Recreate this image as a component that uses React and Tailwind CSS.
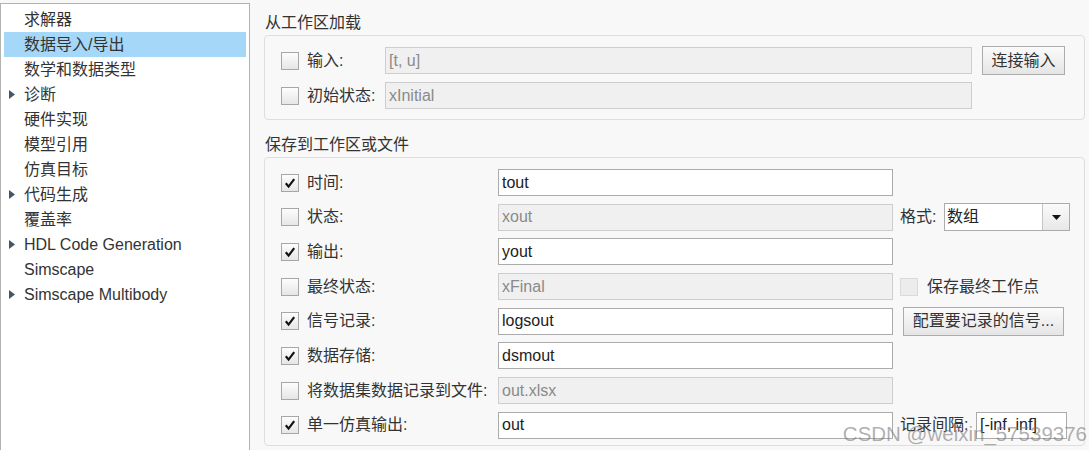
import React from "react";

const navItems = [
  { label: "求解器" },
  { label: "数据导入/导出", active: true },
  { label: "数学和数据类型" },
  { label: "诊断", arrow: true },
  { label: "硬件实现" },
  { label: "模型引用" },
  { label: "仿真目标" },
  { label: "代码生成", arrow: true },
  { label: "覆盖率" },
  { label: "HDL Code Generation", arrow: true },
  { label: "Simscape" },
  { label: "Simscape Multibody", arrow: true },
];

const saveRows = [
  { label: "时间:", value: "tout", checked: true },
  { label: "状态:", value: "xout", extra: "format" },
  { label: "输出:", value: "yout", checked: true },
  { label: "最终状态:", value: "xFinal", extra: "op" },
  { label: "信号记录:", value: "logsout", checked: true, extra: "signals" },
  { label: "数据存储:", value: "dsmout", checked: true },
  { label: "将数据集数据记录到文件:", value: "out.xlsx" },
  { label: "单一仿真输出:", value: "out", checked: true, extra: "interval" },
];

function Checkbox({ checked, disabled }) {
  return (
    <div
      className={
        disabled
          ? "w-[18px] h-[18px] shrink-0 border border-[#dadada] bg-[#ececec]"
          : "w-[18px] h-[18px] shrink-0 border border-[#a7a7a7] bg-gradient-to-b from-[#fdfdfd] to-[#e6e6e6] flex items-center justify-center"
      }
    >
      {checked && (
        <svg width="12" height="12" viewBox="0 0 12 12">
          <path d="M1.8 6.2 L4.6 9.6 L10.2 2.2" fill="none" stroke="#111" strokeWidth="2.2" />
        </svg>
      )}
    </div>
  );
}

function TextField({ value, enabled, w }) {
  return (
    <div
      className={
        enabled
          ? `${w} h-[27px] shrink-0 flex items-center px-[3px] bg-white border border-[#ababab] text-[#222]`
          : `${w} h-[27px] shrink-0 flex items-center px-[3px] bg-[#f0f0f0] border border-[#cdcdcd] text-[#8a8a8a]`
      }
    >
      {value}
    </div>
  );
}

function Button({ children, className }) {
  return (
    <div
      className={`h-[29px] flex items-center justify-center border border-[#acacac] bg-gradient-to-b from-[#fbfbfb] to-[#e5e5e5] text-[#333] ${className}`}
    >
      {children}
    </div>
  );
}

function Extra({ kind }) {
  if (kind === "format") {
    return (
      <div className="flex items-center">
        <span className="w-[44px]">格式:</span>
        <div className="w-[126px] h-[28px] flex bg-white border border-[#acacac]">
          <span className="flex-1 flex items-center pl-[2px] text-[#222]">数组</span>
          <div className="w-[27px] flex items-center justify-center border-l border-[#c4c4c4] bg-gradient-to-b from-[#fafafa] to-[#e8e8e8]">
            <svg width="9" height="5" viewBox="0 0 9 5">
              <path d="M0 0 H9 L4.5 5 Z" fill="#111" />
            </svg>
          </div>
        </div>
      </div>
    );
  }
  if (kind === "op") {
    return (
      <div className="flex items-center gap-[9px]">
        <Checkbox disabled />
        <span>保存最终工作点</span>
      </div>
    );
  }
  if (kind === "signals") {
    return <Button className="ml-[3px] w-[161px] h-[28px]">配置要记录的信号...</Button>;
  }
  if (kind === "interval") {
    return (
      <div className="flex items-center">
        <span className="w-[76px]">记录间隔:</span>
        <TextField value="[-inf, inf]" enabled w="w-[91px]" />
      </div>
    );
  }
  return null;
}

export default function App() {
  return (
    <div
      className="relative w-[1089px] h-[450px] flex bg-[#f8f8f8] text-[16px] text-[#333] overflow-hidden"
      style={{ fontFamily: '"Liberation Sans", "Noto Sans CJK SC", sans-serif' }}
    >
      <div className="w-[250px] shrink-0 mt-[3px] bg-white border-t border-l border-r border-[#b2b2b2] px-[3px] pt-[3px]">
        <ul className="flex flex-col">
          {navItems.map((it) => (
            <li
              key={it.label}
              className={`h-[25px] flex items-center ${it.active ? "bg-[#a4d7f8]" : ""}`}
            >
              <span className="w-[20px] shrink-0 pl-[5px] flex items-center">
                {it.arrow && (
                  <svg width="6" height="9" viewBox="0 0 6 9">
                    <path d="M0 0 L6 4.5 L0 9 Z" fill="#44546a" />
                  </svg>
                )}
              </span>
              <span className="whitespace-nowrap">{it.label}</span>
            </li>
          ))}
        </ul>
      </div>

      <div className="flex-1 pl-[14px] pt-[11px]">
        <h3 className="h-[24px] leading-[24px] pl-[1px] font-normal">从工作区加载</h3>
        <div className="w-[821px] border border-[#dedede] rounded-[4px] pl-[16px] pt-[11px] pb-[10px] flex flex-col gap-[8px]">
          <div className="flex items-center h-[27px]">
            <Checkbox />
            <span className="ml-[8px] w-[78px]">输入:</span>
            <TextField value="[t, u]" w="w-[587px]" />
            <Button className="ml-[10px] w-[83px]">连接输入</Button>
          </div>
          <div className="flex items-center h-[27px]">
            <Checkbox />
            <span className="ml-[8px] w-[78px]">初始状态:</span>
            <TextField value="xInitial" w="w-[587px]" />
          </div>
        </div>

        <h3 className="mt-[13px] h-[24px] leading-[24px] pl-[1px] font-normal">保存到工作区或文件</h3>
        <div className="w-[821px] h-[289px] border border-[#dedede] rounded-[4px] pl-[16px] pt-[11px] flex flex-col gap-[7.7px]">
          {saveRows.map((r) => (
            <div key={r.label} className="flex items-center h-[27px]">
              <Checkbox checked={r.checked} />
              <span className="ml-[8px] w-[191px] whitespace-nowrap">{r.label}</span>
              <TextField value={r.value} enabled={r.checked} w="w-[395px]" />
              <div className="ml-[7px]">
                <Extra kind={r.extra} />
              </div>
            </div>
          ))}
        </div>
      </div>

      <div className="absolute right-[2px] bottom-[6px] text-[20.5px] leading-none text-[#7a7a7a]/60 pointer-events-none">
        CSDN @weixin_57539376
      </div>
    </div>
  );
}
